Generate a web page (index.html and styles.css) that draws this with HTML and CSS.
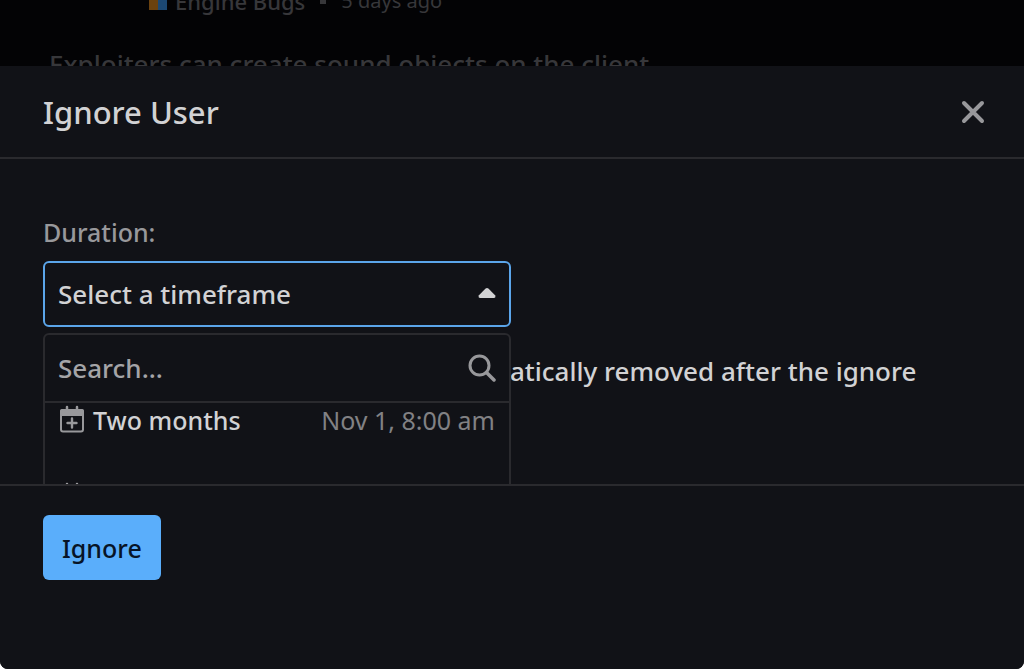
FILE: index.html
```
<!DOCTYPE html>
<html lang="en">
<head>
  <meta charset="UTF-8" />
  <title>Ignore User</title>
  <meta name="viewport" content="width=device-width, initial-scale=1.0" />
  <link rel="stylesheet" href="styles.css">
</head>
<body>

  <div class="screen">
    <!-- Dimmed topic behind the modal -->
    <div class="topic">
      <div class="topic-meta">
        <span class="category-badge"></span>
        <span class="category-name">Engine Bugs</span>
        <span class="separator"></span>
        <span class="topic-age">5 days ago</span>
      </div>
      <p class="topic-excerpt">Exploiters can create sound objects on the client</p>
    </div>

    <!-- Modal -->
    <div class="modal" role="dialog" aria-labelledby="modal-title">
      <header class="modal-header">
        <h1 id="modal-title">Ignore User</h1>
        <button class="close" type="button" aria-label="Close">
          <svg viewBox="0 0 24 24" width="24" height="24">
            <path d="M3 3L21 21M21 3L3 21" fill="none" stroke="currentColor" stroke-width="4" stroke-linecap="round" />
          </svg>
        </button>
      </header>

      <div class="modal-body">
        <label class="duration-label" for="duration">Duration:</label>
        <div class="timeframe">
          <select id="duration">
            <option>Select a timeframe</option>
            <option>Two months</option>
          </select>
          <svg class="caret" viewBox="0 0 18 12" width="18" height="12">
            <path d="M7.600 1.600Q9 .2 10.400 1.600L17.300 8.600Q18 11 16.200 11H1.800Q0 11 .7 8.600Z" fill="currentColor" />
          </svg>

          <div class="dropdown">
            <div class="filter">
              <input type="text" placeholder="Search..." aria-label="Search" />
              <svg viewBox="0 0 28 28" width="28" height="28">
                <circle cx="11.500" cy="11.500" r="9.500" fill="none" stroke="currentColor" stroke-width="3" />
                <path d="M18.500 18.500L26 26" stroke="currentColor" stroke-width="3.500" stroke-linecap="round" />
              </svg>
            </div>
            <ul class="options">
              <li>
                <svg viewBox="0 0 24 28" width="24" height="28">
                  <path d="M7 2V6M17 2V6" stroke="currentColor" stroke-width="2.500" stroke-linecap="round" />
                  <rect x="1" y="5" width="22" height="21.500" rx="2" fill="none" stroke="currentColor" stroke-width="2" />
                  <rect x="0" y="4" width="24" height="7" rx="2" fill="currentColor" />
                  <path d="M12 13.500V22.500M7.500 18H16.500" stroke="currentColor" stroke-width="2.400" stroke-linecap="round" />
                </svg>
                <span class="name">Two months</span>
                <time>Nov 1, 8:00 am</time>
              </li>
              <li>
                <svg viewBox="0 0 24 28" width="24" height="28">
                  <path d="M7 2V6M17 2V6" stroke="currentColor" stroke-width="2.500" stroke-linecap="round" />
                </svg>
              </li>
            </ul>
          </div>
        </div>
        <p class="note">atically removed after the ignore</p>
      </div>

      <footer class="modal-footer">
        <button class="btn-primary" type="button">Ignore</button>
      </footer>
    </div>
  </div>

</body>
</html>
```
FILE: styles.css
```
* {
  box-sizing: border-box;
}
body {
  margin: 0;
  background: #fff;
  color: #d2d2d4;
  font-family: "Noto Sans", "Open Sans", sans-serif;
  font-size: 26px;
  font-weight: 500;
  line-height: 36px;
}
button,
input,
select {
  font: inherit;
}
.screen {
  display: flex;
  flex-direction: column;
  min-height: 100vh;
  background: #030305;
  border-radius: 0 0 8px 8px;
  overflow: hidden;
}

/* Topic */
.topic {
  height: 66px;
  display: flex;
  flex-direction: column;
  justify-content: flex-end;
  overflow: hidden;
  color: #37373a;
}
.topic-meta {
  flex: none;
  display: flex;
  align-items: center;
  padding-left: 149px;
  font-size: 22px;
}
.category-badge {
  width: 18px;
  height: 18px;
  margin-right: 8px;
  background: linear-gradient(to right, #6b420f 50%, #1c4873 50%);
}
.separator {
  width: 6px;
  height: 6px;
  margin: 0 15px;
  background: #37373a;
}
.topic-age {
  font-size: 20px;
  font-weight: 400;
}
.topic-excerpt {
  flex: none;
  height: 20px;
  margin: 27px 0 0 49px;
}

/* Modal */
.modal {
  flex: 1;
  display: flex;
  flex-direction: column;
  background: #111217;
}
.modal-header {
  display: flex;
  align-items: center;
  justify-content: space-between;
  height: 93px;
  padding: 0 39px 0 43px;
  border-bottom: 2px solid #2a2a2e;
}
.modal-header h1 {
  margin: 0;
  font-size: 31px;
  font-weight: 500;
}
.close {
  display: flex;
  padding: 0;
  border: 0;
  background: none;
  color: #98989b;
}
.modal-body {
  height: 325px;
  padding: 55px 43px 0;
  overflow: hidden;
}
.duration-label {
  display: block;
  margin-bottom: 11px;
  color: #98989b;
  font-size: 25px;
}
.timeframe {
  position: relative;
  width: 468px;
}
.timeframe select {
  display: block;
  width: 100%;
  height: 66px;
  padding: 0 13px;
  border: 2px solid #5ba5ea;
  border-radius: 6px;
  outline: none;
  appearance: none;
  background: #111217;
  color: #d2d2d4;
}
.caret {
  position: absolute;
  top: 26px;
  right: 15px;
}

/* Open list, lies over the note */
.dropdown {
  position: absolute;
  top: 72px;
  left: 0;
  width: 100%;
  height: 240px;
  overflow: hidden;
  border: 2px solid #2a2a2e;
  border-radius: 6px;
  background: #111217;
}
.filter {
  display: flex;
  align-items: center;
  height: 68px;
  padding: 0 13px;
  border-bottom: 2px solid #2a2a2e;
  color: #98989b;
}
.filter input {
  flex: 1;
  min-width: 0;
  padding: 0;
  border: 0;
  outline: none;
  background: none;
  color: #d2d2d4;
}
.filter input::placeholder {
  color: #a4a4a7;
  opacity: 1;
}
.options {
  margin: 0;
  padding: 0 14px;
  list-style: none;
}
.options li {
  display: flex;
  align-items: flex-start;
  height: 77px;
  padding-left: 1px;
  font-size: 25px;
  line-height: 34px;
}
.options svg {
  flex: none;
  margin: 2px 9px 0 0;
  color: #98989b;
}
.options time {
  margin-left: auto;
  color: #818184;
  font-weight: 400;
}
.note {
  margin: 26px 0 0;
  padding-left: 467px;
  white-space: nowrap;
}

.modal-footer {
  flex: 1;
  padding: 29px 43px;
  border-top: 2px solid #2a2a2e;
}
.btn-primary {
  height: 65px;
  padding: 0 19px;
  border: 0;
  border-radius: 6px;
  background: #5aaefb;
  color: #071426;
  font-size: 25px;
}
```
